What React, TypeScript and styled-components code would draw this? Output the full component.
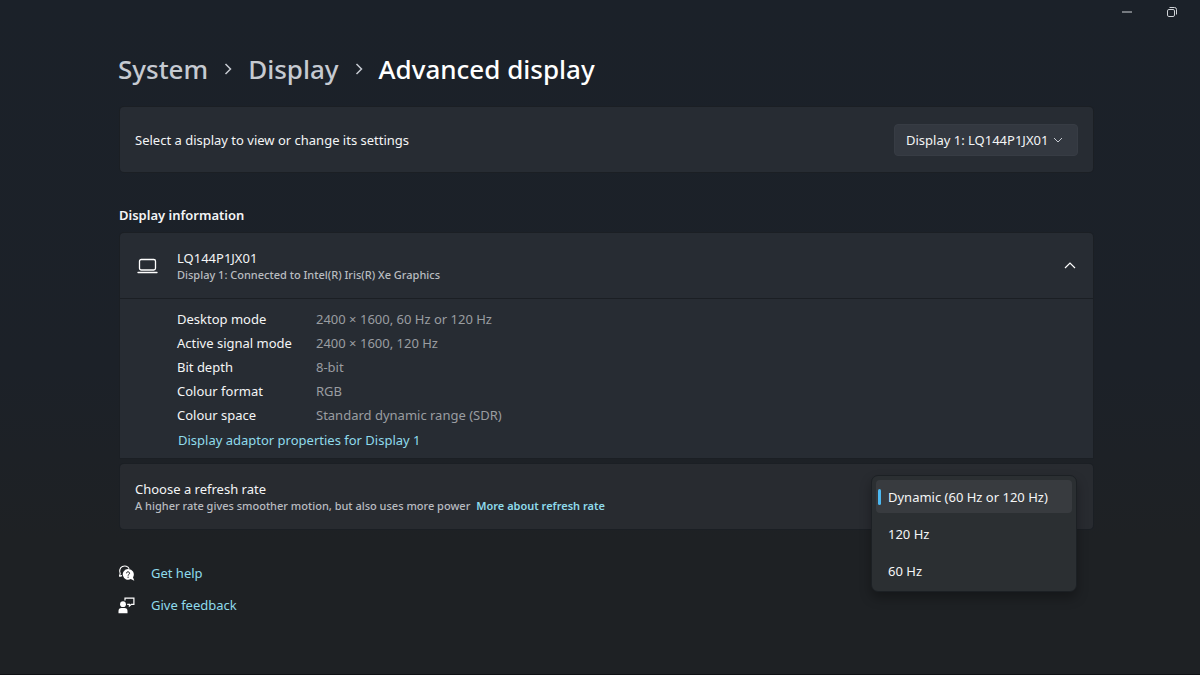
import React, { useState } from "react";
import styled, { createGlobalStyle } from "styled-components";

const GlobalStyle = createGlobalStyle`
  *, *::before, *::after { box-sizing: border-box; }
  body {
    margin: 0;
    background: #1c2025;
    color: #f4f5f6;
    font-family: "Noto Sans", "Open Sans", sans-serif;
    font-size: 13px;
    line-height: 20px;
  }
  h1, h2, p, ul, ol, dl, dd, dt { margin: 0; padding: 0; }
  button, select { font: inherit; color: inherit; }
`;

const Window = styled.div`
  display: flex;
  flex-direction: column;
  min-height: 100vh;
  background: linear-gradient(180deg, #1b2129 0%, #1c2128 55%, #1e2124 80%, #1e2124 100%);
  border-bottom: 1px solid #0f1114;
`;

const TitleBar = styled.header`
  display: flex;
  justify-content: flex-end;
  height: 24px;
  padding-right: 6px;
`;

const CaptionButton = styled.button`
  display: grid;
  place-items: center;
  width: 45px;
  padding: 0;
  border: 0;
  background: none;
`;

const Content = styled.main`
  padding: 24px 107px 40px 120px;
`;

const Breadcrumb = styled.ol`
  display: flex;
  align-items: center;
  list-style: none;
  font-size: 26px;
  font-weight: 500;
  line-height: 40px;
  margin: 1px 0 18px -2px;
`;

const Crumb = styled.li`
  display: flex;
  align-items: center;
`;

const CrumbLink = styled.a`
  color: #c6cad1;
  text-decoration: none;
`;

const CrumbTitle = styled.h1`
  font: inherit;
  color: #ffffff;
`;

const CrumbIcon = styled.svg`
  margin: 0 14px;
`;

const Card = styled.section<{ $flatBottom?: boolean }>`
  background: #272c33;
  border-radius: ${(p) => (p.$flatBottom ? "4px 4px 0 0" : "4px")};
  box-shadow: 0 0 0 1px #1b1f24;
`;

const CardRow = styled.div`
  position: relative;
  display: flex;
  align-items: center;
  justify-content: space-between;
  min-height: 65px;
  padding: 0 15px;
`;

const SelectBox = styled.div`
  position: relative;
  display: flex;
  align-items: center;
`;

const Select = styled.select`
  appearance: none;
  width: 184px;
  height: 32px;
  padding: 0 24px 0 11px;
  border: 1px solid #373c44;
  border-radius: 4px;
  background: #333840;
`;

const SelectIcon = styled.svg`
  position: absolute;
  right: 14px;
  pointer-events: none;
`;

const SectionTitle = styled.h2`
  margin: 33px 0 8px -1px;
  font-size: 13px;
  font-weight: 600;
  line-height: 20px;
`;

const ExpanderHeader = styled.button`
  display: flex;
  align-items: center;
  width: 100%;
  height: 66px;
  padding: 0 17px;
  border: 0;
  border-bottom: 1px solid #1b1f24;
  background: none;
  text-align: left;
`;

const DeviceIcon = styled.svg`
  margin-right: 19px;
`;

const TextStack = styled.span`
  display: flex;
  flex: 1;
  flex-direction: column;
  padding-top: 1px;
`;

const Title = styled.span`
  line-height: 17px;
`;

const Caption = styled.span`
  color: #b9bcc0;
  font-size: 11px;
  font-weight: 500;
  line-height: 16px;
`;

const Details = styled.div`
  padding: 8px 57px 6px;
`;

const InfoGrid = styled.dl`
  display: grid;
  grid-template-columns: 139px 1fr;
  line-height: 24px;
`;

const InfoValue = styled.dd`
  color: #9a9da1;
`;

const Link = styled.a<{ $strong?: boolean }>`
  color: #8fdbec;
  font-weight: ${(p) => (p.$strong ? 600 : 400)};
  text-decoration: none;
`;

const AdaptorLine = styled.p`
  padding: 1px 0 0 1px;
  line-height: 24px;
`;

const RefreshCard = styled(Card)`
  margin-top: 6px;
  background: #282b30;
`;

const InlineLink = styled(Link)`
  margin-left: 6px;
`;

const Menu = styled.ul`
  position: absolute;
  top: 11px;
  right: 16px;
  display: flex;
  flex-direction: column;
  gap: 4px;
  width: 206px;
  padding: 4px;
  border: 1px solid #1c2024;
  border-radius: 7px;
  background: #2b2f32;
  box-shadow: 0 6px 12px rgba(0, 0, 0, 0.3);
  list-style: none;
`;

const Option = styled.button<{ $selected: boolean }>`
  display: flex;
  align-items: center;
  gap: 7px;
  width: 100%;
  height: 33px;
  padding: 0 2px;
  border: 0;
  border-radius: 4px;
  background: ${(p) => (p.$selected ? "#383b3f" : "transparent")};
  text-align: left;

  &::before {
    content: "";
    width: 3px;
    height: 16px;
    border-radius: 2px;
    background: ${(p) => (p.$selected ? "#4cb8f0" : "transparent")};
  }
`;

const HelpLinks = styled.nav`
  display: flex;
  flex-direction: column;
  gap: 8px;
  margin: 32px 0 0 -2px;
`;

const HelpItem = styled.div`
  display: flex;
  align-items: center;
  gap: 16px;
  height: 24px;
`;

type ChevronDir = "up" | "down" | "right";
const chevrons: Record<ChevronDir, string> = {
  up: "M1 8 L6 3 L11 8",
  down: "M2 4 L6 8 L10 4",
  right: "M3.5 1 L8.5 6 L3.5 11",
};

const rates = ["Dynamic (60 Hz or 120 Hz)", "120 Hz", "60 Hz"];

const info = [
  ["Desktop mode", "2400 × 1600, 60 Hz or 120 Hz"],
  ["Active signal mode", "2400 × 1600, 120 Hz"],
  ["Bit depth", "8-bit"],
  ["Colour format", "RGB"],
  ["Colour space", "Standard dynamic range (SDR)"],
];

function chevronProps(color: string) {
  return { width: 12, height: 12, viewBox: "0 0 12 12", fill: "none", stroke: color, "aria-hidden": true };
}

function HelpIcon() {
  return (
    <svg width="17" height="17" viewBox="0 0 17 17" fill="none" aria-hidden="true">
      <path d="M1.5 11.4 L2.2 8.4 A5 5 0 1 1 11.2 3.8 M1.2 11.4 L4 10.6" stroke="#fff" strokeWidth="1.1" />
      <path d="M10 4 a5.4 5.4 0 1 0 2.8 10.1 L16.3 15.8 L15 12.2 A5.4 5.4 0 0 0 10 4 Z" fill="#fff" />
      <path d="M8.5 8.3 a1.5 1.5 0 1 1 2.2 1.3 q-.6 .3 -.6 1" stroke="#1e2124" strokeWidth="1" />
      <circle cx="10.1" cy="12.2" r=".65" fill="#1e2124" />
    </svg>
  );
}

function FeedbackIcon() {
  return (
    <svg width="17" height="17" viewBox="0 0 17 17" fill="none" aria-hidden="true">
      <circle cx="5" cy="7.2" r="2.9" fill="#fff" />
      <path d="M.5 16.3 V14 a3 3 0 0 1 3 -3 H6.5 a3 3 0 0 1 3 3 V16.3 Z" fill="#fff" />
      <path d="M7 3.6 V1.2 H15.9 V7.3 H13.4 L11.4 9 V7.3 H9.2" stroke="#fff" strokeWidth="1.2" />
    </svg>
  );
}

export default function App() {
  const [open, setOpen] = useState(true);
  const [rate, setRate] = useState(rates[0]);

  return (
    <Window>
      <GlobalStyle />
      <TitleBar>
        <CaptionButton aria-label="Minimise">
          <svg width="12" height="12" viewBox="0 0 12 12" stroke="#d0d3d7" aria-hidden="true">
            <path d="M1 6 H11" />
          </svg>
        </CaptionButton>
        <CaptionButton aria-label="Restore">
          <svg width="12" height="12" viewBox="0 0 12 12" fill="none" stroke="#d0d3d7" aria-hidden="true">
            <rect x="1.5" y="3.5" width="7" height="7" rx="1.4" />
            <path d="M3.5 1.5 H8.5 A2 2 0 0 1 10.5 3.5 V8.5" />
          </svg>
        </CaptionButton>
      </TitleBar>
      <Content>
        <nav aria-label="Breadcrumb">
          <Breadcrumb>
            {["System", "Display"].map((name) => (
              <Crumb key={name}>
                <CrumbLink href="#">{name}</CrumbLink>
                <CrumbIcon {...chevronProps("#c6cad1")} strokeWidth="1.5">
                  <path d={chevrons.right} />
                </CrumbIcon>
              </Crumb>
            ))}
            <Crumb>
              <CrumbTitle>Advanced display</CrumbTitle>
            </Crumb>
          </Breadcrumb>
        </nav>

        <Card>
          <CardRow>
            <label htmlFor="display">Select a display to view or change its settings</label>
            <SelectBox>
              <Select id="display">
                <option>Display 1: LQ144P1JX01</option>
              </Select>
              <SelectIcon {...chevronProps("#c6cad1")}>
                <path d={chevrons.down} />
              </SelectIcon>
            </SelectBox>
          </CardRow>
        </Card>

        <SectionTitle>Display information</SectionTitle>
        <Card $flatBottom>
          <ExpanderHeader aria-expanded={open} onClick={() => setOpen(!open)}>
            <DeviceIcon width="21" height="16" viewBox="0 0 21 16" fill="none" stroke="#fff" strokeWidth="1.3" aria-hidden="true">
              <rect x="2.5" y="1.5" width="16" height="10.5" rx="1.8" />
              <path d="M1 14.5 H20" strokeLinecap="round" />
            </DeviceIcon>
            <TextStack>
              <Title>LQ144P1JX01</Title>
              <Caption>Display 1: Connected to Intel(R) Iris(R) Xe Graphics</Caption>
            </TextStack>
            <svg {...chevronProps("#fff")} strokeWidth="1.2">
              <path d={open ? chevrons.up : chevrons.down} />
            </svg>
          </ExpanderHeader>
          {open && (
            <Details>
              <InfoGrid>
                {info.map(([name, value]) => (
                  <React.Fragment key={name}>
                    <dt>{name}</dt>
                    <InfoValue>{value}</InfoValue>
                  </React.Fragment>
                ))}
              </InfoGrid>
              <AdaptorLine>
                <Link href="#">Display adaptor properties for Display 1</Link>
              </AdaptorLine>
            </Details>
          )}
        </Card>

        <RefreshCard>
          <CardRow>
            <TextStack>
              <Title id="rate-label">Choose a refresh rate</Title>
              <Caption>
                A higher rate gives smoother motion, but also uses more power
                <InlineLink $strong href="#">More about refresh rate</InlineLink>
              </Caption>
            </TextStack>
            <Menu role="listbox" aria-labelledby="rate-label">
              {rates.map((r) => (
                <li key={r} role="presentation">
                  <Option role="option" aria-selected={r === rate} $selected={r === rate} onClick={() => setRate(r)}>
                    {r}
                  </Option>
                </li>
              ))}
            </Menu>
          </CardRow>
        </RefreshCard>

        <HelpLinks aria-label="Support">
          <HelpItem>
            <HelpIcon />
            <Link href="#">Get help</Link>
          </HelpItem>
          <HelpItem>
            <FeedbackIcon />
            <Link href="#">Give feedback</Link>
          </HelpItem>
        </HelpLinks>
      </Content>
    </Window>
  );
}
